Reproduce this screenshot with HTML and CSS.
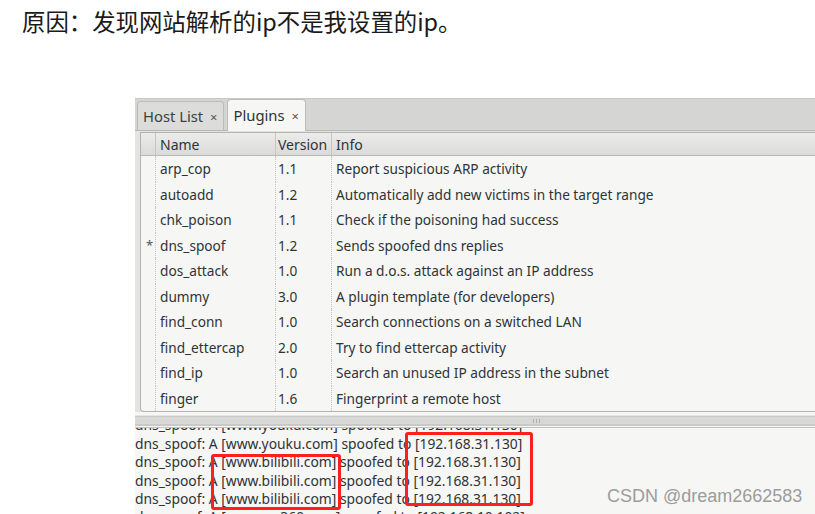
FILE: index.html
```html
<!DOCTYPE html>
<html>
<head>
<meta charset="utf-8">
<link rel="stylesheet" href="styles.css">
</head>
<body>
<p class="reason">原因：发现网站解析的ip不是我设置的ip。</p>
<div class="shot">
  <div class="tabbar">
    <div class="tab">Host List <span class="x">×</span></div>
    <div class="tab active">Plugins <span class="x">×</span></div>
  </div>
  <div class="page">
    <div class="table">
      <div class="row head">
        <div class="c0"></div><div class="c1">Name</div><div class="c2">Version</div><div class="c3">Info</div>
      </div>
      <div class="row"><div class="c0"></div><div class="c1">arp_cop</div><div class="c2">1.1</div><div class="c3">Report suspicious ARP activity</div></div>
      <div class="row"><div class="c0"></div><div class="c1">autoadd</div><div class="c2">1.2</div><div class="c3">Automatically add new victims in the target range</div></div>
      <div class="row"><div class="c0"></div><div class="c1">chk_poison</div><div class="c2">1.1</div><div class="c3">Check if the poisoning had success</div></div>
      <div class="row"><div class="c0">*</div><div class="c1">dns_spoof</div><div class="c2">1.2</div><div class="c3">Sends spoofed dns replies</div></div>
      <div class="row"><div class="c0"></div><div class="c1">dos_attack</div><div class="c2">1.0</div><div class="c3">Run a d.o.s. attack against an IP address</div></div>
      <div class="row"><div class="c0"></div><div class="c1">dummy</div><div class="c2">3.0</div><div class="c3">A plugin template (for developers)</div></div>
      <div class="row"><div class="c0"></div><div class="c1">find_conn</div><div class="c2">1.0</div><div class="c3">Search connections on a switched LAN</div></div>
      <div class="row"><div class="c0"></div><div class="c1">find_ettercap</div><div class="c2">2.0</div><div class="c3">Try to find ettercap activity</div></div>
      <div class="row"><div class="c0"></div><div class="c1">find_ip</div><div class="c2">1.0</div><div class="c3">Search an unused IP address in the subnet</div></div>
      <div class="row"><div class="c0"></div><div class="c1">finger</div><div class="c2">1.6</div><div class="c3">Fingerprint a remote host</div></div>
      <div class="row"><div class="c0"></div><div class="c1"></div><div class="c2"></div><div class="c3"></div></div>
    </div>
  </div>
  <div class="splitter"><span class="grip"></span></div>
  <div class="log">
    <div class="lines">
      <div>dns_spoof: A [www.youku.com] spoofed to [192.168.31.130]</div>
      <div>dns_spoof: A [www.youku.com] spoofed to [192.168.31.130]</div>
      <div>dns_spoof: A [www.bilibili.com] spoofed to [192.168.31.130]</div>
      <div>dns_spoof: A [www.bilibili.com] spoofed to [192.168.31.130]</div>
      <div>dns_spoof: A [www.bilibili.com] spoofed to [192.168.31.130]</div>
      <div>dns_spoof: A [www.so.360.com] spoofed to [192.168.10.102]</div>
    </div>
    <div class="mark mark-ip"></div>
    <div class="mark mark-host"></div>
    <div class="wm">CSDN @dream2662583</div>
  </div>
</div>
</body>
</html>
```

FILE: styles.css
```css
html, body {
  margin: 0;
  padding: 0;
  background: #ffffff;
  overflow: hidden;
}
body {
  width: 815px;
  height: 514px;
}
.reason {
  margin: 6px 0 0 22px;
  font-family: "Noto Sans CJK SC", "Noto Sans", sans-serif;
  font-size: 23.4px;
  line-height: 30px;
  color: #1a1a1a;
  height: 30px;
  white-space: nowrap;
}
.shot {
  margin: 62px 0 0 135px;
  width: 680px;
  height: 416px;
  background: #f6f6f5;
  font-family: "Noto Sans", "DejaVu Sans", sans-serif;
  color: #2e3436;
  display: flex;
  flex-direction: column;
  overflow: hidden;
}
.tabbar {
  height: 33px;
  flex: none;
  background: #d5d5d4;
  border-top: 1px solid #c8c8c8;
  border-bottom: 1px solid #b7b7b6;
  box-sizing: border-box;
  display: flex;
  align-items: flex-end;
  padding-left: 2px;
  gap: 3px;
}
.tab {
  height: 29px;
  box-sizing: border-box;
  padding: 0 6px 0 5px;
  font-size: 14.8px;
  line-height: 28px;
  border: 1px solid #bcbcbb;
  border-bottom: none;
  border-radius: 4px 4px 0 0;
  background: #dcdcdb;
  color: #3c4042;
  margin-bottom: 0;
}
.tab .x {
  font-size: 13px;
  margin-left: 3px;
  color: #555;
}
.tab.active {
  height: 32px;
  background: #f6f6f5;
  margin-bottom: -1px;
  color: #2e3436;
  line-height: 30px;
}
.page {
  flex: none;
  height: 281px;
  background: #e4e4e3;
  padding: 1px 0 0 5px;
  box-sizing: border-box;
}
.table {
  height: 280px;
  border: 1px solid #b3b3b2;
  border-right: none;
  border-radius: 0 0 0 4px;
  background: #f6f6f5;
  overflow: hidden;
  box-sizing: border-box;
}
.row {
  display: flex;
  height: 25.5px;
  font-size: 13.65px;
  align-items: stretch;
}
.row > div {
  display: flex;
  align-items: center;
  box-sizing: border-box;
  padding-left: 4px;
  white-space: nowrap;
  border-left: 1px dotted #c4c4c4;
}
.row > .c0 {
  border-left: none;
  padding-left: 5px;
  font-size: 13px;
  color: #555;
}
.c0 { width: 14px; }
.c1 { width: 120px; }
.c2 { width: 56px; padding-left: 2px !important; }
.c3 { flex: 1; }
.row.head {
  height: 23px;
  font-size: 14px;
  background: linear-gradient(#ececeb, #dadad9);
  border-bottom: 1px solid #b8b8b7;
  box-sizing: border-box;
}
.row.head > div {
  border-left: 1px solid #c6c6c5;
}
.row.head > .c0 { border-left: none; }
.splitter {
  flex: none;
  height: 16px;
  box-sizing: border-box;
  background: #f6f6f5;
  border-bottom: 1px solid #c2c2c1;
  position: relative;
}
.splitter::before {
  content: "";
  display: block;
  margin-top: 3px;
  height: 11px;
  background: linear-gradient(#e6e6e5 0, #e6e6e5 1px, #c9c9c8 1px, #c9c9c8 2px, #d8d8d7 2px, #d8d8d7 9px, #c9c9c8 9px, #c9c9c8 11px);
}
.grip {
  position: absolute;
  left: 398px;
  top: 7px;
  width: 7px;
  height: 4px;
  background: repeating-linear-gradient(90deg, #b0b0af 0, #b0b0af 1px, transparent 1px, transparent 3px);
}
.log {
  flex: 1;
  position: relative;
  overflow: hidden;
  background: #f6f6f5;
}
.lines {
  margin-top: -11.6px;
  font-size: 13.85px;
  line-height: 18.4px;
  color: #2e3436;
  white-space: nowrap;
}
.mark {
  position: absolute;
  border: 3px solid #ff1f1f;
  border-radius: 3px;
  box-sizing: border-box;
}
.mark-ip {
  left: 270px;
  top: 4px;
  width: 128px;
  height: 74px;
}
.mark-host {
  left: 76px;
  top: 26px;
  width: 130px;
  height: 56px;
}
.wm {
  position: absolute;
  left: 472px;
  top: 57px;
  font-family: "Liberation Sans", Arial, sans-serif;
  font-size: 18px;
  line-height: 22px;
  color: #9c9c9c;
  white-space: nowrap;
}
```
